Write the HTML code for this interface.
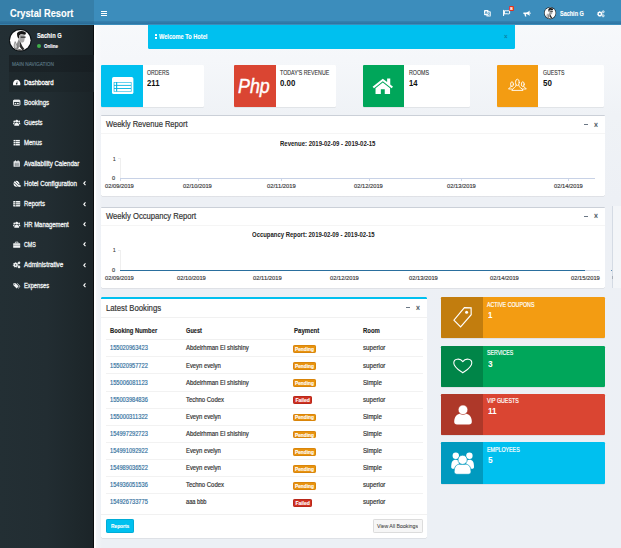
<!DOCTYPE html>
<html lang="en"><head><meta charset="utf-8"><title>Crystal Resort | Dashboard</title>
<style>
html,body{margin:0;padding:0}
body{width:621px;height:548px;overflow:hidden;position:relative;background:#ecf0f5;font-family:"Liberation Sans", sans-serif;}
.a{position:absolute;box-sizing:border-box}
.t{position:absolute;white-space:nowrap;transform-origin:0 50%;line-height:12px;height:12px}
svg{position:absolute;overflow:visible}
</style></head><body>
<div class="page-bg">
<div class="a" style="left:0.00px;top:0.00px;width:621.00px;height:548.00px;background:linear-gradient(180deg,#f8fafc 0px,#f5f7fa 60px,#eff2f6 115px,#edf0f5 200px,#ecf0f5 100%);"></div>
<div class="a" style="left:93.80px;top:0.00px;width:8.00px;height:548.00px;background:linear-gradient(90deg,rgba(255,255,255,.55),rgba(255,255,255,0));"></div>
</div>
<header class="main-header">
<div class="a" style="left:0.00px;top:0.00px;width:621.00px;height:24.50px;background:#3c8dbc;"></div>
<div class="a" style="left:0.00px;top:0.00px;width:93.80px;height:24.50px;background:#367fa9;"></div>
<div class="a" style="left:0.00px;top:21.10px;width:621.00px;height:3.40px;background:linear-gradient(180deg,rgba(30,90,135,.22),rgba(25,80,125,.42));"></div>
<div class="a" style="left:101.00px;top:10.90px;width:6.30px;height:1.25px;background:#fff;"></div>
<div class="a" style="left:101.00px;top:13.05px;width:6.30px;height:1.25px;background:#fff;"></div>
<div class="a" style="left:101.00px;top:15.20px;width:6.30px;height:1.25px;background:#fff;"></div>
<svg style="left:483.60px;top:9.60px" width="6.8" height="6.6" viewBox="0 0 68 66" preserveAspectRatio="none"><rect x="0" y="0" width="46" height="52" rx="9" fill="#fff"/><rect x="24" y="12" width="44" height="54" rx="9" fill="#eef5fa"/><path d="M10 40 L21 12 L32 40 M14 31 H28" stroke="#3c8dbc" stroke-width="7" fill="none"/><path d="M36 30 H60 M48 23 V30 M56 30 C54 44 46 52 38 56 M42 38 C46 48 54 54 62 58" stroke="#3c8dbc" stroke-width="6" fill="none"/></svg>
<svg style="left:503.40px;top:10.20px" width="7.3" height="5.7" viewBox="0 0 73 57" preserveAspectRatio="none"><path d="M6 4 V54" stroke="#fff" stroke-width="11" stroke-linecap="round"/><path d="M14 8 C26 3 36 13 52 8 L66 6 V36 C52 44 36 32 14 40 Z" fill="none" stroke="#fff" stroke-width="10" stroke-linejoin="round"/></svg>
<div class="a" style="left:508.90px;top:6.10px;width:4.80px;height:4.90px;background:#e2321f;border-radius:1.2px"></div>
<svg style="left:523.20px;top:9.80px" width="7.6" height="7" viewBox="0 0 76 70" preserveAspectRatio="none"><path d="M4 24 H30 C46 22 58 14 66 4 V60 C58 50 46 42 30 40 H4 Z" fill="#fff"/><path d="M14 40 H28 L34 66 H20 Z" fill="#fff"/><rect x="68" y="24" width="8" height="16" rx="4" fill="#fff"/></svg>
<svg style="left:543.6px;top:7.3px" width="12.2" height="12.2" viewBox="0 0 226 226"><circle cx="113" cy="113" r="113" fill="#0b1013"/><circle cx="113" cy="113" r="103" fill="#fdfdfd"/><g transform="translate(-16,-24)"><path d="M96 70 C104 40 150 36 178 54 C190 62 186 76 176 82 L150 78 C136 72 124 80 118 94 L114 122 C104 114 96 100 96 70 Z" fill="#161616"/><path d="M118 94 C124 80 138 74 152 80 L172 86 L174 114 L168 144 C160 162 144 164 132 154 C122 144 114 124 118 94 Z" fill="#a9a9a9"/><path d="M132 100 H182 V111 H132 Z" fill="#1c1c1c"/><path d="M128 150 L150 196 L172 226 L150 236 L120 200 Z" fill="#2e2e2e"/><path d="M114 122 L128 152 L120 200 L104 232 C92 236 80 232 76 224 L92 176 C100 156 108 144 114 122 Z" fill="#8d8d8d"/><path d="M78 150 C68 172 62 198 72 216 L92 226 L100 196 L88 170 Z" fill="#c9c9c9" stroke="#555" stroke-width="5"/><path d="M96 236 C110 222 128 224 150 236 C134 246 112 246 96 236 Z" fill="#444"/></g></svg>
<svg style="left:597.40px;top:9.80px" width="8" height="7.2" viewBox="0 0 80 72" preserveAspectRatio="none"><circle cx="28" cy="40" r="17" fill="none" stroke="#fff" stroke-width="14"/><circle cx="28" cy="40" r="24" fill="none" stroke="#fff" stroke-width="7" stroke-dasharray="9 9.85"/><circle cx="62" cy="18" r="8" fill="none" stroke="#fff" stroke-width="8"/><circle cx="62" cy="18" r="13" fill="none" stroke="#fff" stroke-width="5" stroke-dasharray="5 5.2"/><circle cx="62" cy="58" r="8" fill="none" stroke="#fff" stroke-width="8"/><circle cx="62" cy="58" r="13" fill="none" stroke="#fff" stroke-width="5" stroke-dasharray="5 5.2"/></svg>
<span class="t" style="left:9.70px;top:7.00px;font-size:10.6px;color:#fff;font-weight:700;-webkit-text-stroke:0.12px #fff;transform:scaleX(0.875);">Crystal Resort</span>
<span class="t" style="left:509.90px;top:2.70px;font-size:4.4px;color:#fff;font-weight:700;-webkit-text-stroke:0.12px #fff;transform:scaleX(1.141);">8</span>
<span class="t" style="left:560.00px;top:7.90px;font-size:6.6px;color:#fff;font-weight:700;-webkit-text-stroke:0.12px #fff;transform:scaleX(0.832);">Sachin G</span>
</header>
<aside class="main-sidebar">
<div class="a" style="left:0.00px;top:24.50px;width:93.80px;height:523.50px;background:linear-gradient(90deg,#232f34 0,#222d32 50%,#1e282c 80%,#1b2428 100%);"></div>
<div class="a" style="left:92.50px;top:24.50px;width:1.30px;height:523.50px;background:linear-gradient(90deg,rgba(0,0,0,.35),rgba(0,0,0,.9));"></div>
<div class="a" style="left:93.80px;top:24.50px;width:2.40px;height:523.50px;background:rgba(255,255,255,.85);"></div>
<svg style="left:8.8px;top:28.5px" width="22.6" height="22.6" viewBox="0 0 226 226"><circle cx="113" cy="113" r="113" fill="#0b1013"/><circle cx="113" cy="113" r="103" fill="#fdfdfd"/><g transform="translate(-16,-24)"><path d="M96 70 C104 40 150 36 178 54 C190 62 186 76 176 82 L150 78 C136 72 124 80 118 94 L114 122 C104 114 96 100 96 70 Z" fill="#161616"/><path d="M118 94 C124 80 138 74 152 80 L172 86 L174 114 L168 144 C160 162 144 164 132 154 C122 144 114 124 118 94 Z" fill="#a9a9a9"/><path d="M132 100 H182 V111 H132 Z" fill="#1c1c1c"/><path d="M128 150 L150 196 L172 226 L150 236 L120 200 Z" fill="#2e2e2e"/><path d="M114 122 L128 152 L120 200 L104 232 C92 236 80 232 76 224 L92 176 C100 156 108 144 114 122 Z" fill="#8d8d8d"/><path d="M78 150 C68 172 62 198 72 216 L92 226 L100 196 L88 170 Z" fill="#c9c9c9" stroke="#555" stroke-width="5"/><path d="M96 236 C110 222 128 224 150 236 C134 246 112 246 96 236 Z" fill="#444"/></g></svg>
<div class="a" style="left:37.40px;top:43.90px;width:3.90px;height:3.90px;background:#3fae49;border-radius:50%"></div>
<div class="a" style="left:8.90px;top:55.20px;width:84.90px;height:16.50px;background:linear-gradient(90deg,#1b2327 0,#1a2226 55%,#171e22 100%);"></div>
<div class="a" style="left:8.90px;top:71.70px;width:84.90px;height:20.20px;background:linear-gradient(90deg,#1f292d 0,#1e282c 55%,#1a2226 100%);"></div>
<svg style="left:12.75px;top:78.70px" width="7.4" height="7.4" viewBox="0 0 80 80"><path d="M2 68 C-6 30 18 8 40 8 C62 8 86 30 78 68 Z" fill="#fff"/><circle cx="40" cy="52" r="9" fill="#1e282c"/><path d="M40 52 L46 26" stroke="#1e282c" stroke-width="7"/></svg>
<svg style="left:12.75px;top:98.90px" width="7.4" height="7.4" viewBox="0 0 80 80"><rect x="5" y="12" width="70" height="56" rx="8" fill="none" stroke="#f2f5f6" stroke-width="10"/><rect x="5" y="12" width="70" height="20" fill="#f2f5f6"/><rect x="18" y="42" width="16" height="14" fill="#f2f5f6"/><rect x="42" y="42" width="20" height="14" fill="#f2f5f6"/></svg>
<svg style="left:12.75px;top:119.20px" width="7.4" height="7.4" viewBox="0 0 80 80"><circle cx="40" cy="24" r="15" fill="#f2f5f6"/><path d="M14 74 C12 48 24 40 40 40 C56 40 68 48 66 74 Z" fill="#f2f5f6"/><circle cx="14" cy="26" r="10" fill="#f2f5f6"/><circle cx="66" cy="26" r="10" fill="#f2f5f6"/><path d="M0 58 C0 42 6 38 18 38 L14 58 Z M80 58 C80 42 74 38 62 38 L66 58 Z" fill="#f2f5f6"/></svg>
<svg style="left:12.75px;top:139.30px" width="7.4" height="7.4" viewBox="0 0 80 80"><rect x="6" y="10" width="68" height="16" fill="#f2f5f6"/><rect x="6" y="32" width="68" height="16" fill="#f2f5f6"/><rect x="6" y="54" width="68" height="16" fill="#f2f5f6"/><rect x="24" y="8" width="4" height="64" fill="#222d32"/></svg>
<svg style="left:12.75px;top:159.70px" width="7.4" height="7.4" viewBox="0 0 80 80"><rect x="6" y="14" width="68" height="60" rx="6" fill="#f2f5f6"/><rect x="20" y="2" width="10" height="20" rx="4" fill="#f2f5f6"/><rect x="50" y="2" width="10" height="20" rx="4" fill="#f2f5f6"/><path d="M14 34 H66 M14 48 H66 M14 62 H66 M28 30 V70 M42 30 V70 M56 30 V70" stroke="#222d32" stroke-width="3"/></svg>
<svg style="left:12.75px;top:180.10px" width="7.4" height="7.4" viewBox="0 0 80 80"><circle cx="38" cy="40" r="32" fill="#f2f5f6"/><path d="M12 30 L50 70 M24 12 L70 58 M48 4 L76 34" stroke="#222d32" stroke-width="8"/><path d="M58 52 L86 60 L80 76 L56 74 Z" fill="#f2f5f6"/></svg>
<svg style="left:82.90px;top:181.40px" width="3.2" height="4.6" viewBox="0 0 32 46" preserveAspectRatio="none"><path d="M25 4 L8 23 L25 42" fill="none" stroke="#fff" stroke-width="11"/></svg>
<svg style="left:12.75px;top:200.30px" width="7.4" height="7.4" viewBox="0 0 80 80"><rect x="2" y="10" width="76" height="60" rx="5" fill="#f2f5f6"/><path d="M2 30 H78 M2 50 H78 M28 10 V70" stroke="#222d32" stroke-width="6"/></svg>
<svg style="left:82.90px;top:201.60px" width="3.2" height="4.6" viewBox="0 0 32 46" preserveAspectRatio="none"><path d="M25 4 L8 23 L25 42" fill="none" stroke="#fff" stroke-width="11"/></svg>
<svg style="left:12.75px;top:220.70px" width="7.4" height="7.4" viewBox="0 0 80 80"><circle cx="40" cy="24" r="15" fill="#f2f5f6"/><path d="M14 74 C12 48 24 40 40 40 C56 40 68 48 66 74 Z" fill="#f2f5f6"/><circle cx="14" cy="26" r="10" fill="#f2f5f6"/><circle cx="66" cy="26" r="10" fill="#f2f5f6"/><path d="M0 58 C0 42 6 38 18 38 L14 58 Z M80 58 C80 42 74 38 62 38 L66 58 Z" fill="#f2f5f6"/></svg>
<svg style="left:82.90px;top:222.00px" width="3.2" height="4.6" viewBox="0 0 32 46" preserveAspectRatio="none"><path d="M25 4 L8 23 L25 42" fill="none" stroke="#fff" stroke-width="11"/></svg>
<svg style="left:12.75px;top:240.90px" width="7.4" height="7.4" viewBox="0 0 80 80"><rect x="2" y="24" width="76" height="50" rx="6" fill="#f2f5f6"/><path d="M26 24 V12 H54 V24" fill="none" stroke="#f2f5f6" stroke-width="8"/><path d="M2 46 H78" stroke="#222d32" stroke-width="4"/></svg>
<svg style="left:82.90px;top:242.20px" width="3.2" height="4.6" viewBox="0 0 32 46" preserveAspectRatio="none"><path d="M25 4 L8 23 L25 42" fill="none" stroke="#fff" stroke-width="11"/></svg>
<svg style="left:12.75px;top:261.20px" width="7.4" height="7.4" viewBox="0 0 80 80"><circle cx="28" cy="42" r="16" fill="none" stroke="#f2f5f6" stroke-width="16"/><circle cx="28" cy="42" r="25" fill="none" stroke="#f2f5f6" stroke-width="9" stroke-dasharray="10 9.63"/><circle cx="65" cy="20" r="9" fill="none" stroke="#f2f5f6" stroke-width="11"/><circle cx="65" cy="64" r="9" fill="none" stroke="#f2f5f6" stroke-width="11"/></svg>
<svg style="left:82.90px;top:262.50px" width="3.2" height="4.6" viewBox="0 0 32 46" preserveAspectRatio="none"><path d="M25 4 L8 23 L25 42" fill="none" stroke="#fff" stroke-width="11"/></svg>
<svg style="left:12.75px;top:281.50px" width="7.4" height="7.4" viewBox="0 0 80 80"><path d="M4 14 H30 L62 46 L40 70 L4 36 Z" fill="#f2f5f6"/><path d="M40 14 L72 46 L52 70 L60 70 L80 46 L48 14 Z" fill="#f2f5f6"/><circle cx="16" cy="26" r="5" fill="#222d32"/></svg>
<svg style="left:82.90px;top:282.80px" width="3.2" height="4.6" viewBox="0 0 32 46" preserveAspectRatio="none"><path d="M25 4 L8 23 L25 42" fill="none" stroke="#fff" stroke-width="11"/></svg>
<span class="t" style="left:36.70px;top:29.80px;font-size:6.8px;color:#fff;font-weight:700;-webkit-text-stroke:0.12px #fff;transform:scaleX(0.835);">Sachin G</span>
<span class="t" style="left:44.00px;top:40.10px;font-size:5.3px;color:#fff;font-weight:700;-webkit-text-stroke:0.12px #fff;transform:scaleX(0.849);">Online</span>
<span class="t" style="left:11.80px;top:57.50px;font-size:5.7px;color:#587380;-webkit-text-stroke:0.18px #587380;transform:scaleX(0.837);">MAIN NAVIGATION</span>
<span class="t" style="left:23.70px;top:76.70px;font-size:6.6px;color:#fff;-webkit-text-stroke:0.28px #fff;transform:scaleX(0.914);">Dashboard</span>
<span class="t" style="left:23.70px;top:96.90px;font-size:6.6px;color:#f0f4f5;-webkit-text-stroke:0.28px #f0f4f5;transform:scaleX(0.925);">Bookings</span>
<span class="t" style="left:23.70px;top:117.20px;font-size:6.6px;color:#f0f4f5;-webkit-text-stroke:0.28px #f0f4f5;transform:scaleX(0.886);">Guests</span>
<span class="t" style="left:23.70px;top:137.30px;font-size:6.6px;color:#f0f4f5;-webkit-text-stroke:0.28px #f0f4f5;transform:scaleX(0.914);">Menus</span>
<span class="t" style="left:23.70px;top:157.70px;font-size:6.6px;color:#f0f4f5;-webkit-text-stroke:0.28px #f0f4f5;transform:scaleX(0.926);">Availability Calendar</span>
<span class="t" style="left:23.70px;top:178.10px;font-size:6.6px;color:#f0f4f5;-webkit-text-stroke:0.28px #f0f4f5;transform:scaleX(0.939);">Hotel Configuration</span>
<span class="t" style="left:23.70px;top:198.30px;font-size:6.6px;color:#f0f4f5;-webkit-text-stroke:0.28px #f0f4f5;transform:scaleX(0.905);">Reports</span>
<span class="t" style="left:23.70px;top:218.70px;font-size:6.6px;color:#f0f4f5;-webkit-text-stroke:0.28px #f0f4f5;transform:scaleX(0.897);">HR Management</span>
<span class="t" style="left:23.70px;top:238.90px;font-size:6.6px;color:#f0f4f5;-webkit-text-stroke:0.28px #f0f4f5;transform:scaleX(0.812);">CMS</span>
<span class="t" style="left:23.70px;top:259.20px;font-size:6.6px;color:#f0f4f5;-webkit-text-stroke:0.28px #f0f4f5;transform:scaleX(0.946);">Administrative</span>
<span class="t" style="left:23.70px;top:279.50px;font-size:6.6px;color:#f0f4f5;-webkit-text-stroke:0.28px #f0f4f5;transform:scaleX(0.863);">Expenses</span>
</aside>
<main class="content-wrapper">
<div class="a" style="left:147.50px;top:24.50px;width:367.00px;height:24.30px;background:#00c0ef;border-radius:0 0 1.5px 1.5px"></div>
<div class="a" style="left:154.90px;top:34.30px;width:1.90px;height:4.90px;background:#fff;border-radius:.3px"></div>
<div class="a" style="left:154.70px;top:35.70px;width:2.30px;height:0.55px;background:#00c0ef;"></div>
<div class="a" style="left:101.20px;top:65.20px;width:103.00px;height:41.80px;background:#fff;border-radius:1px;box-shadow:0 .5px .6px rgba(0,0,0,.12)"></div>
<div class="a" style="left:101.20px;top:65.20px;width:41.60px;height:41.80px;background:#00c0ef;border-radius:1px 0 0 1px"></div>
<div class="a" style="left:234.10px;top:65.20px;width:102.00px;height:41.80px;background:#fff;border-radius:1px;box-shadow:0 .5px .6px rgba(0,0,0,.12)"></div>
<div class="a" style="left:234.10px;top:65.20px;width:41.60px;height:41.80px;background:#da4532;border-radius:1px 0 0 1px"></div>
<div class="a" style="left:362.60px;top:65.20px;width:107.40px;height:41.80px;background:#fff;border-radius:1px;box-shadow:0 .5px .6px rgba(0,0,0,.12)"></div>
<div class="a" style="left:362.60px;top:65.20px;width:41.60px;height:41.80px;background:#00a65a;border-radius:1px 0 0 1px"></div>
<div class="a" style="left:496.80px;top:65.20px;width:107.70px;height:41.80px;background:#fff;border-radius:1px;box-shadow:0 .5px .6px rgba(0,0,0,.12)"></div>
<div class="a" style="left:496.80px;top:65.20px;width:41.60px;height:41.80px;background:#f39c12;border-radius:1px 0 0 1px"></div>
<svg style="left:111.60px;top:76.90px" width="21.4" height="17.1" viewBox="0 0 214 171" preserveAspectRatio="none"><rect x="0" y="0" width="214" height="171" rx="17" fill="#fff"/><rect x="17" y="50" width="178" height="98" rx="3" fill="#00b4e2"/><rect x="24" y="56" width="17" height="23" fill="#fff"/><rect x="52" y="56" width="137" height="23" fill="#fff"/><rect x="24" y="88" width="17" height="23" fill="#fff"/><rect x="52" y="88" width="137" height="23" fill="#fff"/><rect x="24" y="120" width="17" height="23" fill="#fff"/><rect x="52" y="120" width="137" height="23" fill="#fff"/></svg>
<svg style="left:371.80px;top:77.50px" width="21.6" height="16.6" viewBox="0 0 220 190" preserveAspectRatio="none"><path d="M110 8 L6 100 L20 116 L110 36 L200 116 L214 100 L186 74 V6 H154 V46 Z" fill="#fff"/><path d="M110 52 L36 118 V182 H90 V128 H130 V182 H184 V118 Z" fill="#fff"/></svg>
<svg style="left:507.60px;top:78.00px" width="18.8" height="14.0" viewBox="0 0 188 140" preserveAspectRatio="none"><g fill="none" stroke="#fff" stroke-width="9" stroke-linejoin="round" stroke-linecap="round"><ellipse cx="94" cy="44" rx="19" ry="32"/><path d="M82 70 C84 96 44 100 38 124 H150 C144 100 104 96 106 70"/><ellipse cx="40" cy="62" rx="14" ry="24"/><path d="M32 82 C32 98 8 96 5 110 H40"/><ellipse cx="148" cy="62" rx="14" ry="24"/><path d="M156 82 C156 98 180 96 183 110 H148"/></g></svg>
<div class="a" style="left:101.40px;top:114.80px;width:503.90px;height:81.20px;background:#fff;border-radius:1.4px;box-shadow:0 .5px .6px rgba(0,0,0,.12)"></div>
<div class="a" style="left:101.40px;top:114.80px;width:503.90px;height:1.40px;background:#cbd0d8;border-radius:1.4px 1.4px 0 0"></div>
<div class="a" style="left:101.40px;top:133.00px;width:503.90px;height:0.60px;background:#f5f5f5;"></div>
<div class="a" style="left:584.30px;top:123.90px;width:3.80px;height:1.00px;background:#6b7785;"></div>
<div class="a" style="left:101.40px;top:206.60px;width:503.90px;height:81.20px;background:#fff;border-radius:1.4px;box-shadow:0 .5px .6px rgba(0,0,0,.12)"></div>
<div class="a" style="left:101.40px;top:206.60px;width:503.90px;height:1.40px;background:#cbd0d8;border-radius:1.4px 1.4px 0 0"></div>
<div class="a" style="left:101.40px;top:225.00px;width:503.90px;height:0.60px;background:#f5f5f5;"></div>
<div class="a" style="left:584.30px;top:215.50px;width:3.80px;height:1.00px;background:#6b7785;"></div>
<div class="a" style="left:119.60px;top:158.20px;width:0.50px;height:20.50px;background:#efefef;"></div>
<div class="a" style="left:117.80px;top:158.10px;width:2.00px;height:0.50px;background:#e9ecf2;"></div>
<div class="a" style="left:119.50px;top:178.20px;width:475.70px;height:0.80px;background:#c8d2e6;"></div>
<div class="a" style="left:119.60px;top:179.00px;width:0.50px;height:2.00px;background:#ccd6eb;"></div>
<div class="a" style="left:197.60px;top:179.00px;width:0.50px;height:2.00px;background:#ccd6eb;"></div>
<div class="a" style="left:280.90px;top:179.00px;width:0.50px;height:2.00px;background:#ccd6eb;"></div>
<div class="a" style="left:368.50px;top:179.00px;width:0.50px;height:2.00px;background:#ccd6eb;"></div>
<div class="a" style="left:461.30px;top:179.00px;width:0.50px;height:2.00px;background:#ccd6eb;"></div>
<div class="a" style="left:567.80px;top:179.00px;width:0.50px;height:2.00px;background:#ccd6eb;"></div>
<div class="a" style="left:119.60px;top:249.80px;width:0.50px;height:20.50px;background:#efefef;"></div>
<div class="a" style="left:117.80px;top:249.70px;width:2.00px;height:0.50px;background:#e9ecf2;"></div>
<div class="a" style="left:119.50px;top:270.00px;width:480.60px;height:0.80px;background:#d5dcec;"></div>
<div class="a" style="left:119.80px;top:269.80px;width:465.40px;height:1.20px;background:#2a6f9e;"></div>
<div class="a" style="left:611.60px;top:205.50px;width:9.40px;height:82.50px;background:rgba(255,255,255,.32);border-left:.5px solid rgba(200,208,220,.7)"></div>
<div class="a" style="left:611.40px;top:269.60px;width:0.90px;height:1.20px;background:#5f8fb5;"></div>
<div class="a" style="left:611.50px;top:275.60px;width:0.60px;height:3.60px;background:#a9b0ba;"></div>
<div class="a" style="left:101.40px;top:296.60px;width:326.10px;height:241.30px;background:#fff;border-radius:1.4px;box-shadow:0 .5px .6px rgba(0,0,0,.12)"></div>
<div class="a" style="left:101.40px;top:296.60px;width:326.10px;height:2.00px;background:#00c0ef;border-radius:1.4px 1.4px 0 0"></div>
<div class="a" style="left:101.40px;top:317.00px;width:326.10px;height:0.60px;background:#f1f1f1;"></div>
<div class="a" style="left:405.80px;top:307.20px;width:3.80px;height:1.00px;background:#6b7785;"></div>
<div class="a" style="left:105.80px;top:338.90px;width:317.00px;height:1.00px;background:#f0f0f0;"></div>
<div class="a" style="left:293.40px;top:345.10px;width:22.80px;height:7.80px;background:#e8930f;border-radius:1.2px;border:.5px solid #d9850a"></div>
<div class="a" style="left:105.80px;top:356.37px;width:317.00px;height:0.60px;background:#f2f2f2;"></div>
<div class="a" style="left:293.40px;top:362.22px;width:22.80px;height:7.80px;background:#e8930f;border-radius:1.2px;border:.5px solid #d9850a"></div>
<div class="a" style="left:105.80px;top:373.49px;width:317.00px;height:0.60px;background:#f2f2f2;"></div>
<div class="a" style="left:293.40px;top:379.34px;width:22.80px;height:7.80px;background:#e8930f;border-radius:1.2px;border:.5px solid #d9850a"></div>
<div class="a" style="left:105.80px;top:390.61px;width:317.00px;height:0.60px;background:#f2f2f2;"></div>
<div class="a" style="left:293.40px;top:396.46px;width:18.60px;height:7.80px;background:#cf3222;border-radius:1.2px;border:.5px solid #b9281a"></div>
<div class="a" style="left:105.80px;top:407.73px;width:317.00px;height:0.60px;background:#f2f2f2;"></div>
<div class="a" style="left:293.40px;top:413.58px;width:22.80px;height:7.80px;background:#e8930f;border-radius:1.2px;border:.5px solid #d9850a"></div>
<div class="a" style="left:105.80px;top:424.85px;width:317.00px;height:0.60px;background:#f2f2f2;"></div>
<div class="a" style="left:293.40px;top:430.70px;width:22.80px;height:7.80px;background:#e8930f;border-radius:1.2px;border:.5px solid #d9850a"></div>
<div class="a" style="left:105.80px;top:441.97px;width:317.00px;height:0.60px;background:#f2f2f2;"></div>
<div class="a" style="left:293.40px;top:447.82px;width:22.80px;height:7.80px;background:#e8930f;border-radius:1.2px;border:.5px solid #d9850a"></div>
<div class="a" style="left:105.80px;top:459.09px;width:317.00px;height:0.60px;background:#f2f2f2;"></div>
<div class="a" style="left:293.40px;top:464.94px;width:22.80px;height:7.80px;background:#e8930f;border-radius:1.2px;border:.5px solid #d9850a"></div>
<div class="a" style="left:105.80px;top:476.21px;width:317.00px;height:0.60px;background:#f2f2f2;"></div>
<div class="a" style="left:293.40px;top:482.06px;width:22.80px;height:7.80px;background:#e8930f;border-radius:1.2px;border:.5px solid #d9850a"></div>
<div class="a" style="left:105.80px;top:493.33px;width:317.00px;height:0.60px;background:#f2f2f2;"></div>
<div class="a" style="left:293.40px;top:499.18px;width:18.60px;height:7.80px;background:#cf3222;border-radius:1.2px;border:.5px solid #b9281a"></div>
<div class="a" style="left:101.40px;top:514.00px;width:326.10px;height:0.60px;background:#f1f1f1;"></div>
<div class="a" style="left:106.00px;top:519.10px;width:28.00px;height:13.80px;background:#00c0ef;border-radius:1.2px;border:.5px solid #00acd6"></div>
<div class="a" style="left:372.80px;top:519.30px;width:50.20px;height:13.50px;background:#f6f6f6;border-radius:1.2px;border:.6px solid #dcdcdc"></div>
<div class="a" style="left:441.20px;top:297.30px;width:164.20px;height:41.20px;background:#f39c12;border-radius:1.2px;box-shadow:0 .5px .6px rgba(0,0,0,.12)"></div>
<div class="a" style="left:441.20px;top:297.30px;width:41.60px;height:41.20px;background:#c27d0e;border-radius:1.2px 0 0 1.2px"></div>
<svg style="left:0;top:0" width="621" height="548" viewBox="0 0 621 548"><path d="M453.9 320.2 L460.6 327 L471.2 314.7 L471.1 307.9 L464.4 307.7 Z" fill="none" stroke="#fff" stroke-width="1.15" stroke-linejoin="miter"/><circle cx="466.6" cy="312.3" r="1.5" fill="#fff"/></svg>
<div class="a" style="left:441.20px;top:346.00px;width:164.20px;height:40.80px;background:#00a65a;border-radius:1.2px;box-shadow:0 .5px .6px rgba(0,0,0,.12)"></div>
<div class="a" style="left:441.20px;top:346.00px;width:41.60px;height:40.80px;background:#008548;border-radius:1.2px 0 0 1.2px"></div>
<svg style="left:452.60px;top:358.20px" width="19.6" height="15.9" viewBox="0 0 200 156" preserveAspectRatio="none"><path d="M100 146 C60 118 8 88 8 48 C8 8 70 -4 100 36 C130 -4 192 8 192 48 C192 88 140 118 100 146 Z" fill="none" stroke="#fff" stroke-width="11" stroke-linejoin="round"/></svg>
<div class="a" style="left:441.20px;top:393.70px;width:164.20px;height:41.80px;background:#da4532;border-radius:1.2px;box-shadow:0 .5px .6px rgba(0,0,0,.12)"></div>
<div class="a" style="left:441.20px;top:393.70px;width:41.60px;height:41.80px;background:#ae3829;border-radius:1.2px 0 0 1.2px"></div>
<svg style="left:453.60px;top:405.00px" width="18" height="19.4" viewBox="0 0 180 194" preserveAspectRatio="none"><path d="M2 168 C2 116 30 90 60 90 L120 90 C150 90 178 116 178 168 C178 186 168 194 150 194 H30 C12 194 2 186 2 168 Z" fill="#fff"/><circle cx="90" cy="48" r="48" fill="#fff" stroke="#ae3829" stroke-width="6"/></svg>
<div class="a" style="left:441.20px;top:442.40px;width:164.20px;height:41.50px;background:#00c0ef;border-radius:1.2px;box-shadow:0 .5px .6px rgba(0,0,0,.12)"></div>
<div class="a" style="left:441.20px;top:442.40px;width:41.60px;height:41.50px;background:#009abf;border-radius:1.2px 0 0 1.2px"></div>
<svg style="left:450.50px;top:451.60px" width="23.2" height="22.3" viewBox="0 0 232 223" preserveAspectRatio="none"><circle cx="48" cy="38" r="32" fill="#fff"/><circle cx="184" cy="38" r="32" fill="#fff"/><path d="M2 150 C2 100 14 78 48 78 C66 78 80 86 86 98 L60 168 H22 C8 168 2 162 2 150 Z" fill="#fff"/><path d="M230 150 C230 100 218 78 184 78 C166 78 152 86 146 98 L172 168 H210 C224 168 230 162 230 150 Z" fill="#fff"/><path d="M32 196 C32 146 56 122 86 122 H146 C176 122 200 146 200 196 C200 214 190 223 172 223 H60 C42 223 32 214 32 196 Z" fill="#fff" stroke="#009abf" stroke-width="7"/><circle cx="116" cy="78" r="46" fill="#fff" stroke="#009abf" stroke-width="7"/></svg>
<span class="t" style="left:158.60px;top:31.30px;font-size:6.7px;color:#fff;font-weight:700;-webkit-text-stroke:0.12px #fff;transform:scaleX(0.844);">Welcome To Hotel</span>
<span class="t" style="left:503.60px;top:31.00px;font-size:7.5px;color:#0b7fa0;-webkit-text-stroke:0.18px #0b7fa0;transform:scaleX(0.820);">×</span>
<span class="t" style="left:147.40px;top:67.10px;font-size:6.9px;color:#333;-webkit-text-stroke:0.1px #333;transform:scaleX(0.753);">ORDERS</span>
<span class="t" style="left:147.40px;top:77.20px;font-size:8.6px;color:#111;font-weight:700;transform:scaleX(0.901);">211</span>
<span class="t" style="left:280.30px;top:67.10px;font-size:6.9px;color:#333;-webkit-text-stroke:0.1px #333;transform:scaleX(0.767);">TODAY'S REVENUE</span>
<span class="t" style="left:280.30px;top:77.20px;font-size:8.6px;color:#111;font-weight:700;transform:scaleX(0.914);">0.00</span>
<span class="t" style="left:408.80px;top:67.10px;font-size:6.9px;color:#333;-webkit-text-stroke:0.1px #333;transform:scaleX(0.772);">ROOMS</span>
<span class="t" style="left:408.80px;top:77.20px;font-size:8.6px;color:#111;font-weight:700;transform:scaleX(0.889);">14</span>
<span class="t" style="left:543.00px;top:67.10px;font-size:6.9px;color:#333;-webkit-text-stroke:0.1px #333;transform:scaleX(0.755);">GUESTS</span>
<span class="t" style="left:543.00px;top:77.20px;font-size:8.6px;color:#111;font-weight:700;transform:scaleX(0.931);">50</span>
<span class="t" style="left:238.30px;top:80.40px;font-size:21px;color:#fff;font-style:italic;-webkit-text-stroke:0.45px #fff;transform:scaleX(0.851);">Php</span>
<span class="t" style="left:105.70px;top:118.20px;font-size:8.6px;color:#333;-webkit-text-stroke:0.18px #333;transform:scaleX(0.877);">Weekly Revenue Report</span>
<span class="t" style="left:593.70px;top:118.70px;font-size:8.4px;color:#4d5a66;font-weight:700;-webkit-text-stroke:0.12px #4d5a66;transform:scaleX(0.795);">×</span>
<span class="t" style="left:105.70px;top:209.80px;font-size:8.6px;color:#333;-webkit-text-stroke:0.18px #333;transform:scaleX(0.888);">Weekly Occupancy Report</span>
<span class="t" style="left:593.70px;top:210.30px;font-size:8.4px;color:#4d5a66;font-weight:700;-webkit-text-stroke:0.12px #4d5a66;transform:scaleX(0.795);">×</span>
<span class="t" style="left:279.60px;top:137.60px;font-size:6.8px;color:#222;font-weight:700;transform:scaleX(0.883);">Revenue: 2019-02-09 - 2019-02-15</span>
<span class="t" style="left:112.70px;top:152.60px;font-size:5.6px;color:#444;-webkit-text-stroke:0.18px #444;transform:scaleX(0.832);">1</span>
<span class="t" style="left:112.40px;top:172.40px;font-size:5.6px;color:#444;-webkit-text-stroke:0.18px #444;transform:scaleX(0.992);">0</span>
<span class="t" style="left:105.40px;top:179.70px;font-size:5.8px;color:#444;-webkit-text-stroke:0.18px #444;transform:scaleX(0.993);">02/09/2019</span>
<span class="t" style="left:183.40px;top:179.70px;font-size:5.8px;color:#444;-webkit-text-stroke:0.18px #444;transform:scaleX(0.993);">02/10/2019</span>
<span class="t" style="left:266.70px;top:179.70px;font-size:5.8px;color:#444;-webkit-text-stroke:0.18px #444;transform:scaleX(1.007);">02/11/2019</span>
<span class="t" style="left:354.30px;top:179.70px;font-size:5.8px;color:#444;-webkit-text-stroke:0.18px #444;transform:scaleX(0.993);">02/12/2019</span>
<span class="t" style="left:447.10px;top:179.70px;font-size:5.8px;color:#444;-webkit-text-stroke:0.18px #444;transform:scaleX(0.993);">02/13/2019</span>
<span class="t" style="left:553.60px;top:179.70px;font-size:5.8px;color:#444;-webkit-text-stroke:0.18px #444;transform:scaleX(0.993);">02/14/2019</span>
<span class="t" style="left:251.60px;top:229.10px;font-size:6.8px;color:#222;font-weight:700;transform:scaleX(0.875);">Occupancy Report: 2019-02-09 - 2019-02-15</span>
<span class="t" style="left:112.70px;top:244.10px;font-size:5.6px;color:#444;-webkit-text-stroke:0.18px #444;transform:scaleX(0.832);">1</span>
<span class="t" style="left:112.40px;top:264.10px;font-size:5.6px;color:#444;-webkit-text-stroke:0.18px #444;transform:scaleX(0.992);">0</span>
<span class="t" style="left:105.40px;top:271.50px;font-size:5.8px;color:#444;-webkit-text-stroke:0.18px #444;transform:scaleX(0.993);">02/09/2019</span>
<span class="t" style="left:176.90px;top:271.50px;font-size:5.8px;color:#444;-webkit-text-stroke:0.18px #444;transform:scaleX(0.993);">02/10/2019</span>
<span class="t" style="left:252.70px;top:271.50px;font-size:5.8px;color:#444;-webkit-text-stroke:0.18px #444;transform:scaleX(1.007);">02/11/2019</span>
<span class="t" style="left:329.90px;top:271.50px;font-size:5.8px;color:#444;-webkit-text-stroke:0.18px #444;transform:scaleX(0.993);">02/12/2019</span>
<span class="t" style="left:408.90px;top:271.50px;font-size:5.8px;color:#444;-webkit-text-stroke:0.18px #444;transform:scaleX(0.993);">02/13/2019</span>
<span class="t" style="left:489.70px;top:271.50px;font-size:5.8px;color:#444;-webkit-text-stroke:0.18px #444;transform:scaleX(0.993);">02/14/2019</span>
<span class="t" style="left:570.70px;top:271.50px;font-size:5.8px;color:#444;-webkit-text-stroke:0.18px #444;transform:scaleX(0.993);">02/15/2019</span>
<span class="t" style="left:105.90px;top:301.70px;font-size:8.6px;color:#333;-webkit-text-stroke:0.18px #333;transform:scaleX(0.901);">Latest Bookings</span>
<span class="t" style="left:415.90px;top:302.10px;font-size:8.4px;color:#4d5a66;font-weight:700;-webkit-text-stroke:0.12px #4d5a66;transform:scaleX(0.795);">×</span>
<span class="t" style="left:110.00px;top:325.00px;font-size:6.3px;color:#222;font-weight:700;-webkit-text-stroke:0.12px #222;transform:scaleX(0.930);">Booking Number</span>
<span class="t" style="left:186.20px;top:325.00px;font-size:6.3px;color:#222;font-weight:700;-webkit-text-stroke:0.12px #222;transform:scaleX(0.896);">Guest</span>
<span class="t" style="left:293.50px;top:325.00px;font-size:6.3px;color:#222;font-weight:700;-webkit-text-stroke:0.12px #222;transform:scaleX(0.964);">Payment</span>
<span class="t" style="left:362.80px;top:325.00px;font-size:6.3px;color:#222;font-weight:700;-webkit-text-stroke:0.12px #222;transform:scaleX(0.947);">Room</span>
<span class="t" style="left:110.00px;top:342.40px;font-size:6.3px;color:#35739f;-webkit-text-stroke:0.18px #35739f;transform:scaleX(0.899);">155020963423</span>
<span class="t" style="left:186.20px;top:342.40px;font-size:6.3px;color:#333;-webkit-text-stroke:0.18px #333;transform:scaleX(0.954);">Abdelrhman El shishiny</span>
<span class="t" style="left:295.40px;top:342.90px;font-size:5.0px;color:#fff;font-weight:700;-webkit-text-stroke:0.12px #fff;transform:scaleX(0.953);">Pending</span>
<span class="t" style="left:362.80px;top:342.40px;font-size:6.3px;color:#333;-webkit-text-stroke:0.18px #333;transform:scaleX(0.985);">superior</span>
<span class="t" style="left:110.00px;top:359.52px;font-size:6.3px;color:#35739f;-webkit-text-stroke:0.18px #35739f;transform:scaleX(0.899);">155020957722</span>
<span class="t" style="left:186.20px;top:359.52px;font-size:6.3px;color:#333;-webkit-text-stroke:0.18px #333;transform:scaleX(0.929);">Eveyn evelyn</span>
<span class="t" style="left:295.40px;top:360.02px;font-size:5.0px;color:#fff;font-weight:700;-webkit-text-stroke:0.12px #fff;transform:scaleX(0.953);">Pending</span>
<span class="t" style="left:362.80px;top:359.52px;font-size:6.3px;color:#333;-webkit-text-stroke:0.18px #333;transform:scaleX(0.985);">superior</span>
<span class="t" style="left:110.00px;top:376.64px;font-size:6.3px;color:#35739f;-webkit-text-stroke:0.18px #35739f;transform:scaleX(0.909);">155006081123</span>
<span class="t" style="left:186.20px;top:376.64px;font-size:6.3px;color:#333;-webkit-text-stroke:0.18px #333;transform:scaleX(0.954);">Abdelrhman El shishiny</span>
<span class="t" style="left:295.40px;top:377.14px;font-size:5.0px;color:#fff;font-weight:700;-webkit-text-stroke:0.12px #fff;transform:scaleX(0.953);">Pending</span>
<span class="t" style="left:362.80px;top:376.64px;font-size:6.3px;color:#333;-webkit-text-stroke:0.18px #333;transform:scaleX(0.977);">Simple</span>
<span class="t" style="left:110.00px;top:393.76px;font-size:6.3px;color:#35739f;-webkit-text-stroke:0.18px #35739f;transform:scaleX(0.899);">155003984836</span>
<span class="t" style="left:186.20px;top:393.76px;font-size:6.3px;color:#333;-webkit-text-stroke:0.18px #333;transform:scaleX(0.944);">Techno Codex</span>
<span class="t" style="left:295.40px;top:394.26px;font-size:5.0px;color:#fff;font-weight:700;-webkit-text-stroke:0.12px #fff;">Failed</span>
<span class="t" style="left:362.80px;top:393.76px;font-size:6.3px;color:#333;-webkit-text-stroke:0.18px #333;transform:scaleX(0.985);">superior</span>
<span class="t" style="left:110.00px;top:410.88px;font-size:6.3px;color:#35739f;-webkit-text-stroke:0.18px #35739f;transform:scaleX(0.909);">155000311322</span>
<span class="t" style="left:186.20px;top:410.88px;font-size:6.3px;color:#333;-webkit-text-stroke:0.18px #333;transform:scaleX(0.929);">Eveyn evelyn</span>
<span class="t" style="left:295.40px;top:411.38px;font-size:5.0px;color:#fff;font-weight:700;-webkit-text-stroke:0.12px #fff;transform:scaleX(0.953);">Pending</span>
<span class="t" style="left:362.80px;top:410.88px;font-size:6.3px;color:#333;-webkit-text-stroke:0.18px #333;transform:scaleX(0.977);">Simple</span>
<span class="t" style="left:110.00px;top:428.00px;font-size:6.3px;color:#35739f;-webkit-text-stroke:0.18px #35739f;transform:scaleX(0.899);">154997292723</span>
<span class="t" style="left:186.20px;top:428.00px;font-size:6.3px;color:#333;-webkit-text-stroke:0.18px #333;transform:scaleX(0.954);">Abdelrhman El shishiny</span>
<span class="t" style="left:295.40px;top:428.50px;font-size:5.0px;color:#fff;font-weight:700;-webkit-text-stroke:0.12px #fff;transform:scaleX(0.953);">Pending</span>
<span class="t" style="left:362.80px;top:428.00px;font-size:6.3px;color:#333;-webkit-text-stroke:0.18px #333;transform:scaleX(0.977);">Simple</span>
<span class="t" style="left:110.00px;top:445.12px;font-size:6.3px;color:#35739f;-webkit-text-stroke:0.18px #35739f;transform:scaleX(0.899);">154991092922</span>
<span class="t" style="left:186.20px;top:445.12px;font-size:6.3px;color:#333;-webkit-text-stroke:0.18px #333;transform:scaleX(0.929);">Eveyn evelyn</span>
<span class="t" style="left:295.40px;top:445.62px;font-size:5.0px;color:#fff;font-weight:700;-webkit-text-stroke:0.12px #fff;transform:scaleX(0.953);">Pending</span>
<span class="t" style="left:362.80px;top:445.12px;font-size:6.3px;color:#333;-webkit-text-stroke:0.18px #333;transform:scaleX(0.977);">Simple</span>
<span class="t" style="left:110.00px;top:462.24px;font-size:6.3px;color:#35739f;-webkit-text-stroke:0.18px #35739f;transform:scaleX(0.899);">154989036522</span>
<span class="t" style="left:186.20px;top:462.24px;font-size:6.3px;color:#333;-webkit-text-stroke:0.18px #333;transform:scaleX(0.929);">Eveyn evelyn</span>
<span class="t" style="left:295.40px;top:462.74px;font-size:5.0px;color:#fff;font-weight:700;-webkit-text-stroke:0.12px #fff;transform:scaleX(0.953);">Pending</span>
<span class="t" style="left:362.80px;top:462.24px;font-size:6.3px;color:#333;-webkit-text-stroke:0.18px #333;transform:scaleX(0.977);">Simple</span>
<span class="t" style="left:110.00px;top:479.36px;font-size:6.3px;color:#35739f;-webkit-text-stroke:0.18px #35739f;transform:scaleX(0.899);">154936051536</span>
<span class="t" style="left:186.20px;top:479.36px;font-size:6.3px;color:#333;-webkit-text-stroke:0.18px #333;transform:scaleX(0.944);">Techno Codex</span>
<span class="t" style="left:295.40px;top:479.86px;font-size:5.0px;color:#fff;font-weight:700;-webkit-text-stroke:0.12px #fff;transform:scaleX(0.953);">Pending</span>
<span class="t" style="left:362.80px;top:479.36px;font-size:6.3px;color:#333;-webkit-text-stroke:0.18px #333;transform:scaleX(0.985);">superior</span>
<span class="t" style="left:110.00px;top:496.48px;font-size:6.3px;color:#35739f;-webkit-text-stroke:0.18px #35739f;transform:scaleX(0.899);">154926733775</span>
<span class="t" style="left:186.20px;top:496.48px;font-size:6.3px;color:#333;-webkit-text-stroke:0.18px #333;transform:scaleX(0.900);">aaa bbb</span>
<span class="t" style="left:295.40px;top:496.98px;font-size:5.0px;color:#fff;font-weight:700;-webkit-text-stroke:0.12px #fff;">Failed</span>
<span class="t" style="left:362.80px;top:496.48px;font-size:6.3px;color:#333;-webkit-text-stroke:0.18px #333;transform:scaleX(0.985);">superior</span>
<span class="t" style="left:110.90px;top:520.40px;font-size:5.8px;color:#fff;font-weight:700;-webkit-text-stroke:0.12px #fff;transform:scaleX(0.831);">Reports</span>
<span class="t" style="left:377.00px;top:520.40px;font-size:6.1px;color:#444;-webkit-text-stroke:0.08px #444;transform:scaleX(0.854);">View All Bookings</span>
<span class="t" style="left:487.30px;top:298.50px;font-size:6.9px;color:#fff;-webkit-text-stroke:0.2px #fff;transform:scaleX(0.770);">ACTIVE COUPONS</span>
<span class="t" style="left:487.60px;top:308.90px;font-size:8.6px;color:#fff;font-weight:700;transform:scaleX(0.920);">1</span>
<span class="t" style="left:487.30px;top:347.20px;font-size:6.9px;color:#fff;-webkit-text-stroke:0.2px #fff;transform:scaleX(0.757);">SERVICES</span>
<span class="t" style="left:487.60px;top:357.60px;font-size:8.6px;color:#fff;font-weight:700;transform:scaleX(0.962);">3</span>
<span class="t" style="left:487.30px;top:394.90px;font-size:6.9px;color:#fff;-webkit-text-stroke:0.2px #fff;transform:scaleX(0.769);">VIP GUESTS</span>
<span class="t" style="left:487.60px;top:405.30px;font-size:8.6px;color:#fff;font-weight:700;transform:scaleX(0.957);">11</span>
<span class="t" style="left:487.30px;top:443.60px;font-size:6.9px;color:#fff;-webkit-text-stroke:0.2px #fff;transform:scaleX(0.769);">EMPLOYEES</span>
<span class="t" style="left:487.60px;top:454.00px;font-size:8.6px;color:#fff;font-weight:700;transform:scaleX(0.962);">5</span>
</main>
</body></html>
